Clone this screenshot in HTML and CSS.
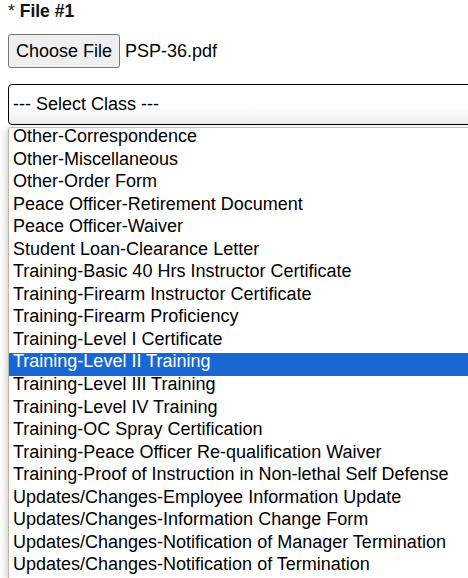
FILE: index.html
```html
<!DOCTYPE html>
<html lang="en">
<head>
    <meta charset="UTF-8">
    <title>Upload File</title>
    <link rel="stylesheet" href="styles.css">
</head>
<body>
<div class="upload">
    <p class="fileLabel"><span class="req">*</span> <b>File #1</b></p>
    <div class="fileRow">
        <span class="btnChoose">Choose File</span>
        <span class="fileName">PSP-36.pdf</span>
    </div>
    <div class="classSelect">--- Select Class ---</div>
    <ul class="classList">
        <li>Other-Correspondence</li>
        <li>Other-Miscellaneous</li>
        <li>Other-Order Form</li>
        <li>Peace Officer-Retirement Document</li>
        <li>Peace Officer-Waiver</li>
        <li>Student Loan-Clearance Letter</li>
        <li>Training-Basic 40 Hrs Instructor Certificate</li>
        <li>Training-Firearm Instructor Certificate</li>
        <li>Training-Firearm Proficiency</li>
        <li>Training-Level I Certificate</li>
        <li class="active">Training-Level II Training</li>
        <li>Training-Level III Training</li>
        <li>Training-Level IV Training</li>
        <li>Training-OC Spray Certification</li>
        <li>Training-Peace Officer Re-qualification Waiver</li>
        <li>Training-Proof of Instruction in Non-lethal Self Defense</li>
        <li>Updates/Changes-Employee Information Update</li>
        <li>Updates/Changes-Information Change Form</li>
        <li>Updates/Changes-Notification of Manager Termination</li>
        <li>Updates/Changes-Notification of Termination</li>
    </ul>
</div>
</body>
</html>
```

FILE: styles.css
```css
html,body{margin:0;padding:0;overflow:hidden;background:#fff;}
body{font-family:"Liberation Sans",Arial,sans-serif;color:#000;}
.upload{padding:1px 0 0 8px;width:520px;}
.fileLabel{margin:0;font-size:17.5px;line-height:20px;color:#222;}
.fileLabel b{color:#111;}
.fileRow{display:flex;align-items:center;gap:5px;margin-top:13px;height:34px;}
.btnChoose{box-sizing:border-box;height:34px;padding:0 7px;font-size:18px;line-height:32px;background:#efefef;border:1px solid #767676;border-radius:3px;}
.fileName{font-size:18px;}
.classSelect{box-sizing:border-box;margin-top:16px;height:41px;width:520px;padding:2px 0 0 4px;border:1.5px solid #000;border-radius:4px;font-size:18px;line-height:35px;background:linear-gradient(#fff 55%,#ececec);}
.classList{list-style:none;margin:2px 0 0;padding:0;width:520px;border-left:1px solid #bdb6a6;border-top:1px solid #c9c2b0;border-radius:4px 0 0 0;background:#fff;box-shadow:-2px 2px 6px rgba(0,0,0,.18);}
.classList li{height:22.56px;line-height:16.6px;padding:0 0 0 4px;box-sizing:border-box;font-size:18px;white-space:nowrap;}
.classList li.active{background:#1967d2;color:#fff;}
```
